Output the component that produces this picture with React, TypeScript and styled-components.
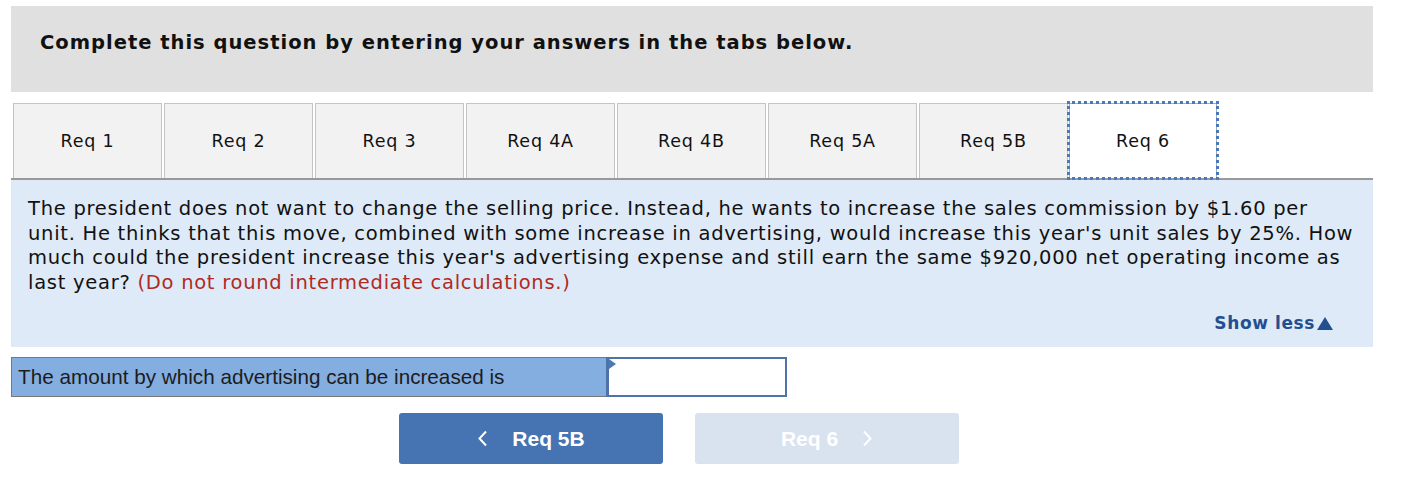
import React from "react";
import styled, { createGlobalStyle } from "styled-components";

const Global = createGlobalStyle`
  html, body { margin: 0; padding: 0; background: #ffffff; }
  body { font-family: "DejaVu Sans", Verdana, sans-serif; }
`;

const Page = styled.div`
  width: 1362px;
  padding: 6px 0 0 11px;
`;

const Header = styled.div`
  height: 86px;
  background: #e0e0e0;
  display: flex;
  align-items: flex-start;
  padding: 25px 0 0 29px;
  box-sizing: border-box;
`;

const HeaderText = styled.h1`
  margin: 0;
  font-family: "DejaVu Sans", Verdana, sans-serif;
  font-weight: bold;
  font-size: 19.5px;
  letter-spacing: 1px;
  line-height: 24px;
  color: #111;
`;

const TabBar = styled.div`
  display: flex;
  gap: 2px;
  margin-top: 11px;
  padding-left: 2px;
`;

const Tab = styled.div<{ $active?: boolean }>`
  width: 149px;
  height: 75px;
  box-sizing: border-box;
  border: 1px solid #c4c4c4;
  border-bottom: none;
  background: ${(p) => (p.$active ? "#ffffff" : "#f2f2f2")};
  display: flex;
  align-items: center;
  justify-content: center;
  font-size: 17.5px;
  letter-spacing: 0.8px;
  color: #111;
  position: relative;
  ${(p) =>
    p.$active
      ? `outline: 3px dotted #4a78b8; outline-offset: -1px; border-color:#aaa; width:148px; margin-left:-1px; z-index:1;`
      : ""}
`;

const Panel = styled.div`
  background: #deeaf7;
  border-top: 2px solid #999;
  height: 169px;
  box-sizing: border-box;
  padding: 17px 17px 0 17px;
  display: flex;
  flex-direction: column;
`;

const Question = styled.p`
  margin: 0;
  font-size: 19.5px;
  letter-spacing: 0.73px;
  line-height: 24.7px;
  color: #111;
  white-space: nowrap;
`;

const Note = styled.span`
  color: #b02a23;
`;

const ShowLess = styled.div`
  align-self: flex-end;
  margin-top: auto;
  margin-bottom: 14px;
  margin-right: 23px;
  font-weight: bold;
  font-size: 17px;
  letter-spacing: 0.6px;
  color: #244f8f;
  display: flex;
  align-items: center;
`;

const Tri = styled.span`
  display: inline-block;
  width: 0;
  height: 0;
  border-left: 8px solid transparent;
  border-right: 8px solid transparent;
  border-bottom: 13px solid #244f8f;
  margin-left: 2px;
`;

const AnswerRow = styled.div`
  display: flex;
  margin-top: 10px;
  height: 40px;
`;

const Label = styled.div`
  width: 595px;
  box-sizing: border-box;
  background: #84ade0;
  border: 1px solid #777;
  border-right: none;
  font-family: "Liberation Sans", Arial, sans-serif;
  font-size: 20.7px;
  color: #1c1c1c;
  display: flex;
  align-items: center;
  padding-left: 6px;
`;

const InputCell = styled.div`
  width: 181px;
  box-sizing: border-box;
  border: 2px solid #4f73a8;
  border-left: 3px solid #4f73a8;
  background: #fff;
  position: relative;
`;

const Corner = styled.span`
  position: absolute;
  top: 0;
  left: 0;
  width: 0;
  height: 0;
  border-top: 5px solid transparent;
  border-bottom: 5px solid transparent;
  border-left: 7px solid #4a78b8;
`;

const NavRow = styled.div`
  display: flex;
  gap: 32px;
  margin-top: 16px;
  padding-left: 388px;
`;

const NavButton = styled.div<{ $disabled?: boolean }>`
  width: 264px;
  height: 51px;
  border-radius: 3px;
  background: ${(p) => (p.$disabled ? "#d9e3ef" : "#4673b1")};
  color: #fff;
  font-family: "Liberation Sans", Arial, sans-serif;
  font-weight: bold;
  font-size: 21px;
  display: flex;
  align-items: center;
  justify-content: center;
  gap: 24px;
`;

const Chevron = ({ dir }: { dir: "left" | "right" }) => (
  <svg width="11" height="17" viewBox="0 0 11 17">
    <path
      d={dir === "left" ? "M9 1.5 L2.5 8.5 L9 15.5" : "M2 1.5 L8.5 8.5 L2 15.5"}
      fill="none"
      stroke="#fff"
      strokeWidth="2"
    />
  </svg>
);

const tabs = ["Req 1", "Req 2", "Req 3", "Req 4A", "Req 4B", "Req 5A", "Req 5B", "Req 6"];

export default function App() {
  return (
    <>
      <Global />
      <Page>
        <Header>
          <HeaderText>Complete this question by entering your answers in the tabs below.</HeaderText>
        </Header>
        <TabBar>
          {tabs.map((t) => (
            <Tab key={t} $active={t === "Req 6"}>
              {t}
            </Tab>
          ))}
        </TabBar>
        <Panel>
          <Question>
            The president does not want to change the selling price. Instead, he wants to increase the sales
            commission by $1.60 per
            <br />
            unit. He thinks that this move, combined with some increase in advertising, would increase this
            year's unit sales by 25%. How
            <br />
            much could the president increase this year's advertising expense and still earn the same $920,000
            net operating income as
            <br />
            last year? <Note>(Do not round intermediate calculations.)</Note>
          </Question>
          <ShowLess>
            Show less
            <Tri />
          </ShowLess>
        </Panel>
        <AnswerRow>
          <Label>The amount by which advertising can be increased is</Label>
          <InputCell>
            <Corner />
          </InputCell>
        </AnswerRow>
        <NavRow>
          <NavButton>
            <Chevron dir="left" />
            <span>Req 5B</span>
          </NavButton>
          <NavButton $disabled>
            <span>Req 6</span>
            <Chevron dir="right" />
          </NavButton>
        </NavRow>
      </Page>
    </>
  );
}
